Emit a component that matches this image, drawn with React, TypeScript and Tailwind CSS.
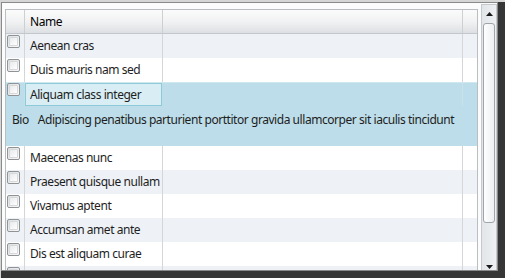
const names = [
  "Aenean cras",
  "Duis mauris nam sed",
  "Aliquam class integer",
  "Maecenas nunc",
  "Praesent quisque nullam",
  "Vivamus aptent",
  "Accumsan amet ante",
  "Dis est aliquam curae",
  "",
];

const SELECTED = 2;

function CheckBox() {
  return (
    <div className="w-[13px] h-[13px] rounded-[2px] border border-[#8f9396] bg-gradient-to-br from-[#dcdee0] to-[#fbfbfb] p-[1px]">
      <div className="w-full h-full rounded-[1px] border border-[#d6d8da] bg-gradient-to-br from-[#e8eaec] to-[#ffffff]" />
    </div>
  );
}

function Arrow({ up }: { up?: boolean }) {
  return (
    <svg width="7" height="4" viewBox="0 0 7 4">
      <polygon points={up ? "3.5,0 7,4 0,4" : "0,0 7,0 3.5,4"} fill="#1a1a1a" />
    </svg>
  );
}

function Row({ name, index }: { name: string; index: number }) {
  const selected = index === SELECTED;
  const bg = selected ? "bg-[#bcdde9]" : index % 2 === 0 ? "bg-[#eef2f7]" : "bg-white";

  if (selected) {
    return (
      <div className={`${bg} border-t border-[#cfe7ef]`}>
        <div className="flex h-[23px]">
          <div className="w-[19px] shrink-0 border-r border-[#c5dfe8] pl-[1px]">
            <CheckBox />
          </div>
          <div className="w-[137px] shrink-0 border border-[#8ecad8] bg-[#d8edf4] px-[4px] leading-[21px] whitespace-nowrap">
            {name}
          </div>
          <div className="w-[301px] shrink-0 border-r border-[#c9e2ea]" />
          <div className="flex-1" />
        </div>
        <div className="h-[40px] flex items-start gap-[9px] pl-[6px] pt-[6px] leading-[16px] whitespace-nowrap">
          <span>Bio</span>
          <span>
            Adipiscing penatibus parturient porttitor gravida ullamcorper sit iaculis tincidunt
          </span>
        </div>
      </div>
    );
  }

  return (
    <div className={`${bg} flex h-[24px]`}>
      <div className="w-[19px] shrink-0 border-r border-[#d4d6d8] pl-[1px] pt-[1px]">
        <CheckBox />
      </div>
      <div className="w-[138px] shrink-0 border-r border-[#d4d6d8] pl-[5px] leading-[24px] whitespace-nowrap">
        {name}
      </div>
      <div className="w-[300px] shrink-0 border-r border-[#d4d6d8]" />
      <div className="flex-1" />
    </div>
  );
}

export default function App() {
  return (
    <div className="w-[505px] h-[278px] bg-[#d6d6d6] overflow-hidden font-['Noto_Sans',sans-serif] text-[12px] tracking-[-0.45px] text-[#1e1e1e]">
      <div className="ml-[1px] mt-[2px] w-[497px] h-[269px] border border-[#8a8a8a] bg-[#fcfcfc] shadow-[4px_4px_0_4px_#363636] overflow-hidden">
        <div className="flex items-start pl-[3px]">
          {/* grid */}
          <div className="mt-[6px] w-[473px] h-[261px] border-l border-t border-r border-[#b9bec3] overflow-hidden bg-white">
            <div className="flex h-[24px] border-b border-[#c4c8cc] bg-gradient-to-b from-[#fbfbfb] via-[#f1f2f3] to-[#dde0e3] text-black">
              <div className="w-[19px] shrink-0 border-r border-[#cdd0d3]" />
              <div className="w-[138px] shrink-0 border-r border-[#cdd0d3] pl-[5px] leading-[23px]">
                Name
              </div>
              <div className="w-[300px] shrink-0 border-r border-[#cdd0d3]" />
              <div className="flex-1" />
            </div>
            {names.map((n, i) => (
              <Row key={i} name={n} index={i} />
            ))}
          </div>

          {/* scrollbar */}
          <div className="ml-[3px] mt-[1px] w-[16px] h-[272px] shrink-0 border border-[#c5c9cd] bg-gradient-to-r from-[#e2e5e9] to-[#eef0f3] flex flex-col">
            <div className="h-[17px] flex items-center justify-center">
              <Arrow up />
            </div>
            <div className="mt-[1px] mx-[1px] h-[200px] rounded-[3px] border border-[#9ea4aa] bg-gradient-to-r from-[#ffffff] to-[#eceef1]" />
            <div className="flex-1" />
            <div className="h-[17px] flex items-center justify-center">
              <Arrow />
            </div>
          </div>
        </div>
      </div>
    </div>
  );
}
